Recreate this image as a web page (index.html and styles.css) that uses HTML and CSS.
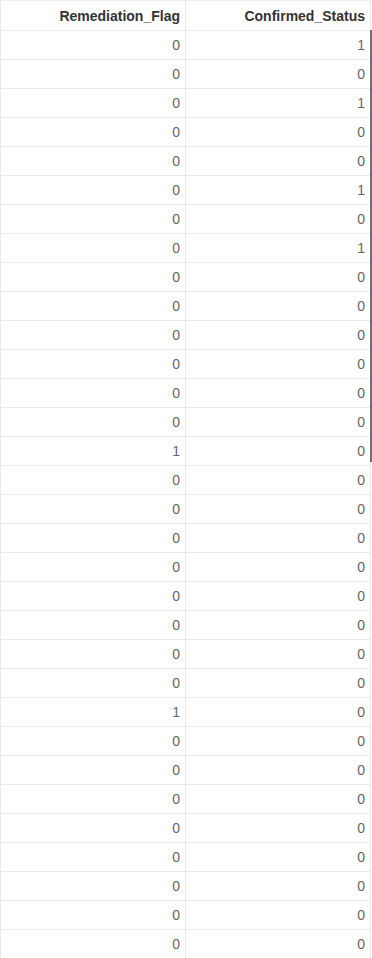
FILE: index.html
```html
<!DOCTYPE html>
<html>
<head>
<meta charset="utf-8">
<link rel="stylesheet" href="styles.css">
</head>
<body>
<div class="wrap">
<table class="grid">
<thead>
<tr><th>Remediation_Flag</th><th>Confirmed_Status</th></tr>
</thead>
<tbody>
<tr><td>0</td><td>1</td></tr>
<tr><td>0</td><td>0</td></tr>
<tr><td>0</td><td>1</td></tr>
<tr><td>0</td><td>0</td></tr>
<tr><td>0</td><td>0</td></tr>
<tr><td>0</td><td>1</td></tr>
<tr><td>0</td><td>0</td></tr>
<tr><td>0</td><td>1</td></tr>
<tr><td>0</td><td>0</td></tr>
<tr><td>0</td><td>0</td></tr>
<tr><td>0</td><td>0</td></tr>
<tr><td>0</td><td>0</td></tr>
<tr><td>0</td><td>0</td></tr>
<tr><td>0</td><td>0</td></tr>
<tr><td>1</td><td>0</td></tr>
<tr><td>0</td><td>0</td></tr>
<tr><td>0</td><td>0</td></tr>
<tr><td>0</td><td>0</td></tr>
<tr><td>0</td><td>0</td></tr>
<tr><td>0</td><td>0</td></tr>
<tr><td>0</td><td>0</td></tr>
<tr><td>0</td><td>0</td></tr>
<tr><td>0</td><td>0</td></tr>
<tr><td>1</td><td>0</td></tr>
<tr><td>0</td><td>0</td></tr>
<tr><td>0</td><td>0</td></tr>
<tr><td>0</td><td>0</td></tr>
<tr><td>0</td><td>0</td></tr>
<tr><td>0</td><td>0</td></tr>
<tr><td>0</td><td>0</td></tr>
<tr><td>0</td><td>0</td></tr>
<tr><td>0</td><td>0</td></tr>
</tbody>
</table>
<div class="scrollbar"></div>
</div>
</body>
</html>
```
FILE: styles.css
```css
html, body {
  margin: 0;
  padding: 0;
  background: #ffffff;
}
.wrap {
  position: relative;
  width: 372px;
}
.grid {
  border-collapse: collapse;
  table-layout: fixed;
  width: 371px;
  font-family: "Liberation Sans", Arial, sans-serif;
}
.grid th,
.grid td {
  width: 50%;
  border: 1px solid #e8eaed;
  text-align: right;
  padding: 0 5px;
  box-sizing: border-box;
}
.grid th {
  height: 30px;
  font-size: 14px;
  font-weight: bold;
  color: #333333;
  border-top-color: #eceef0;
}
.grid td {
  height: 29px;
  font-size: 14px;
  color: #666666;
}
.scrollbar {
  position: absolute;
  left: 370px;
  top: 30px;
  width: 2px;
  height: 432px;
  background: #6b6f75;
}
```
